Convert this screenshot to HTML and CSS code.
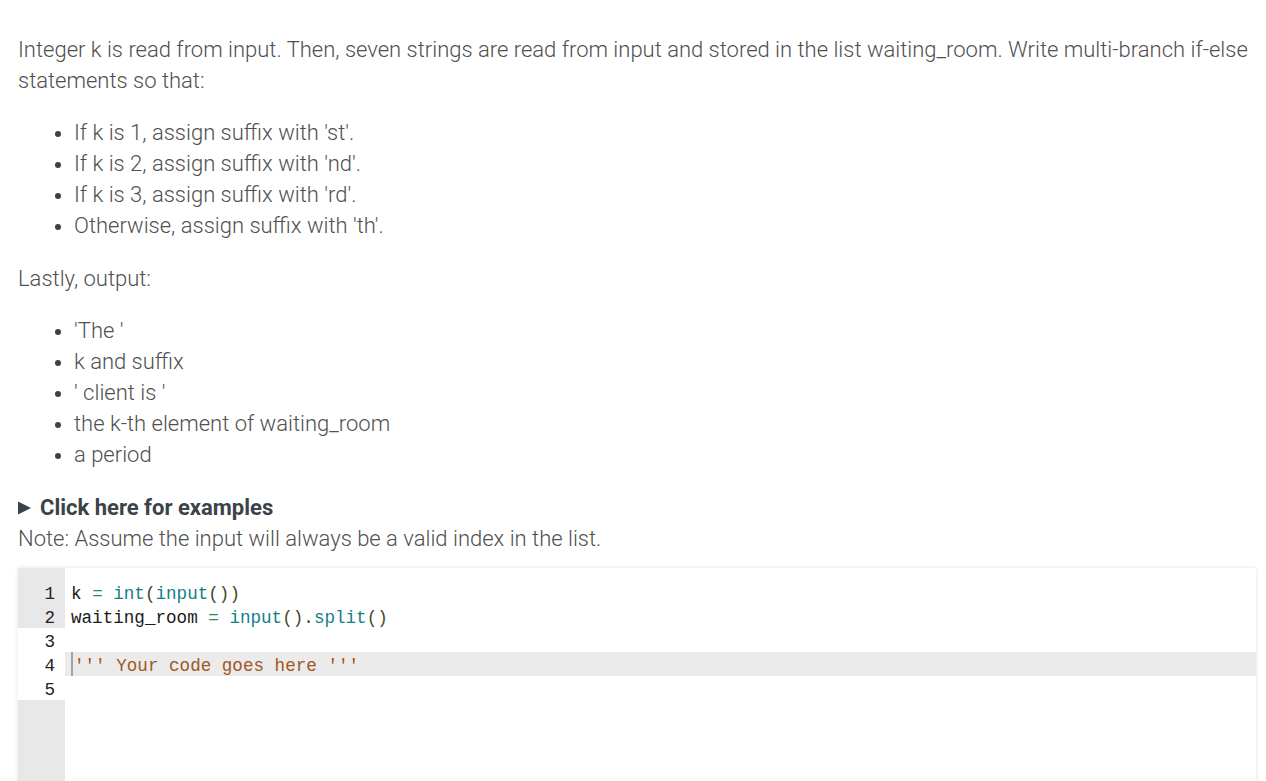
FILE: index.html
```html
<!DOCTYPE html>
<html>
<head>
<meta charset="utf-8">
<link rel="stylesheet" href="styles.css">
</head>
<body>
<div class="page">
  <p class="para">Integer k is read from input. Then, seven strings are read from input and stored in the list waiting_room. Write multi-branch if-else statements so that:</p>
  <ul class="list">
    <li>If k is 1, assign suffix with 'st'.</li>
    <li>If k is 2, assign suffix with 'nd'.</li>
    <li>If k is 3, assign suffix with 'rd'.</li>
    <li>Otherwise, assign suffix with 'th'.</li>
  </ul>
  <p class="para second">Lastly, output:</p>
  <ul class="list last">
    <li>'The '</li>
    <li>k and suffix</li>
    <li>' client is '</li>
    <li>the k-th element of waiting_room</li>
    <li>a period</li>
  </ul>
  <div class="examples">
    <svg class="tri" width="13" height="14" viewBox="0 0 13 14"><polygon points="0,0.5 13,7 0,13.5" fill="#3b4349"/></svg>
    <span>Click here for examples</span>
  </div>
  <p class="note">Note: Assume the input will always be a valid index in the list.</p>
  <div class="editor">
    <div class="gutter">
      <div class="gpad"></div>
      <div class="ln">1</div>
      <div class="ln">2</div>
      <div class="ln white">3</div>
      <div class="ln white">4</div>
      <div class="ln white">5</div>
    </div>
    <div class="code">
      <div class="line"><span class="var">k</span> <span class="op">=</span> <span class="bi">int</span><span class="p">(</span><span class="bi">input</span><span class="p">())</span></div>
      <div class="line"><span class="var">waiting_room</span> <span class="op">=</span> <span class="bi">input</span><span class="p">().</span><span class="bi">split</span><span class="p">()</span></div>
      <div class="line"> </div>
      <div class="line active"><span class="cursor"></span><span class="str">''' Your code goes here '''</span></div>
      <div class="line"> </div>
    </div>
  </div>
</div>
</body>
</html>
```

FILE: styles.css
```css
html, body {
  margin: 0;
  padding: 0;
  background: #ffffff;
}
.page {
  padding: 34px 10px 0 18px;
  font-family: Roboto, "Liberation Sans", sans-serif;
  font-weight: 300;
  font-size: 22px;
  line-height: 31px;
  color: #505050;
}
.para {
  margin: 0;
}
.para.second {
  padding-top: 1px;
}
.list {
  margin: 21px 0 21px 0;
  padding-left: 56px;
}
.list.last {
  margin-bottom: 22px;
}
.list li {
  line-height: 31px;
}
.list li::marker {
  color: #3b4349;
  font-size: 20px;
}
.examples {
  display: flex;
  align-items: center;
  gap: 9px;
  font-weight: 700;
  color: #3b4349;
  height: 31px;
}
.tri {
  display: block;
}
.note {
  margin: 0;
}
.editor {
  margin-top: 14px;
  display: flex;
  height: 320px;
  background: #fff;
  box-shadow: 0 0 4px rgba(0, 0, 0, 0.12);
  font-family: "Liberation Mono", "DejaVu Sans Mono", monospace;
  font-size: 17.6px;
  font-weight: 400;
  line-height: 28px;
}
.gutter {
  width: 47px;
  background: #e8e8e8;
  flex: none;
}
.gpad {
  height: 12px;
}
.ln {
  height: 24px;
  text-align: right;
  padding-right: 10px;
  color: #222;
}
.ln.white {
  background: #fff;
}
.code {
  flex: 1;
  padding-top: 12px;
}
.line {
  height: 24px;
  padding-left: 6px;
  white-space: pre;
  color: #222;
}
.line.active {
  background: #ebebeb;
}
.cursor {
  display: inline-block;
  width: 2px;
  height: 24px;
  background: #a3a3a3;
  vertical-align: top;
  margin-right: 1px;
}
.var { color: #1a1a1a; }
.op { color: #2e8b57; }
.bi { color: #127f87; }
.p { color: #3f4a2a; }
.str { color: #a1581c; }
```
